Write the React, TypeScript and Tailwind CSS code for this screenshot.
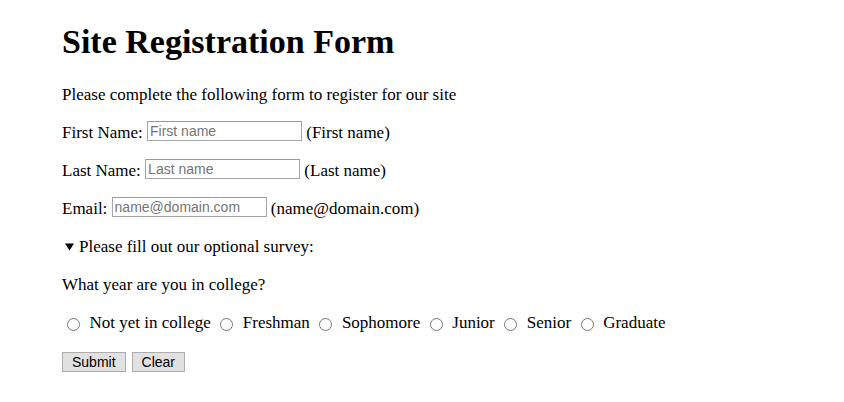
import { useState } from "react";

const years = ["Not yet in college", "Freshman", "Sophomore", "Junior", "Senior", "Graduate"];

function TextField({ label, placeholder, hint }: { label: string; placeholder: string; hint: string }) {
  return (
    <div className="flex items-center h-[38px]">
      <label className="flex items-center">
        <span>{label}</span>
        <input
          type="text"
          placeholder={placeholder}
          className="ml-[4.25px] w-[155px] h-[20px] px-[2px] -translate-y-[2px] border border-[#a5a5a5] border-t-[#999999] bg-white text-[14px] font-['Liberation_Sans',Arial,sans-serif] text-black placeholder:text-[#757575] outline-none"
        />
      </label>
      <span className="ml-[4.25px]">{hint}</span>
    </div>
  );
}

export default function App() {
  const [year, setYear] = useState("");

  return (
    <div className="min-h-screen bg-white text-black text-[17px] font-['Liberation_Serif','Times_New_Roman',serif] pl-[62px] pt-[22px]">
      <h1 className="text-[34px] font-bold leading-[39px]">Site Registration Form</h1>

      <form className="mt-[15px]" onSubmit={(e) => e.preventDefault()}>
        <div className="flex items-center h-[38px]">
          Please complete the following form to register for our site
        </div>

        <TextField label="First Name:" placeholder="First name" hint="(First name)" />
        <TextField label="Last Name:" placeholder="Last name" hint="(Last name)" />
        <TextField label="Email:" placeholder="name@domain.com" hint="(name@domain.com)" />

        <details open>
          <summary className="flex items-center h-[38px] cursor-pointer select-none">
            <svg width="9" height="8" viewBox="0 0 9 8" className="ml-[3px]">
              <polygon points="0,0.5 9,0.5 4.5,7.5" fill="#000" />
            </svg>
            <span className="ml-[5px]">Please fill out our optional survey:</span>
          </summary>

          <div className="flex items-center h-[38px]">What year are you in college?</div>

          <div className="flex items-center h-[38px]">
            {years.map((y, i) => (
              <label key={y} className={`flex items-center ${i === 0 ? "ml-[5px]" : "ml-[9.5px]"}`}>
                <input
                  type="radio"
                  name="year"
                  value={y}
                  checked={year === y}
                  onChange={() => setYear(y)}
                  className="appearance-none m-0 w-[13px] h-[13px] rounded-full border border-[#767676] bg-white translate-y-[1px] checked:bg-[radial-gradient(circle,#000_0_3px,#fff_3.5px)]"
                />
                <span className="ml-[9.5px]">{y}</span>
              </label>
            ))}
          </div>
        </details>

        <div className="flex gap-[6px] pt-[10px] font-['Liberation_Sans',Arial,sans-serif] text-[14px]">
          <button type="submit" className="h-[20px] px-[9px] border border-[#adadad] bg-[#e1e1e1] text-black leading-none">
            Submit
          </button>
          <button type="reset" onClick={() => setYear("")} className="h-[20px] px-[9px] border border-[#adadad] bg-[#e1e1e1] text-black leading-none">
            Clear
          </button>
        </div>
      </form>
    </div>
  );
}
